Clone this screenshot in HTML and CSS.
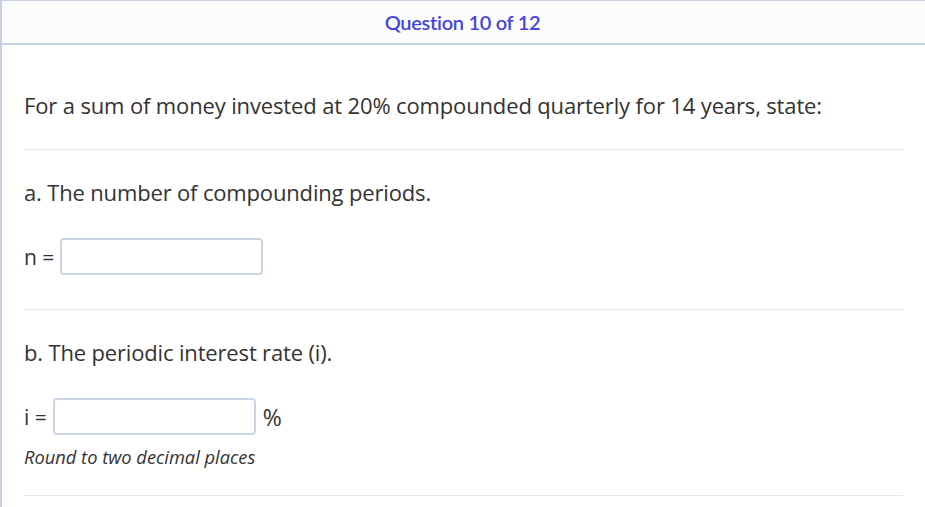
FILE: index.html
```html
<!DOCTYPE html>
<html lang="en">
<head>
<meta charset="utf-8">
<title>Question 10 of 12</title>
<link rel="stylesheet" href="styles.css">
</head>
<body>
<div class="frame">
  <header class="header">
    <h1 class="header-title">Question 10 of 12</h1>
  </header>
  <main class="content">
    <p class="prompt">For a sum of money invested at 20% compounded quarterly for 14 years, state:</p>
    <hr class="divider">
    <section class="part">
      <p class="part-title">a. The number of compounding periods.</p>
      <div class="answer-row">
        <span class="label">n =</span>
        <input class="answer" type="text" aria-label="n">
      </div>
    </section>
    <hr class="divider">
    <section class="part">
      <p class="part-title">b. The periodic interest rate (i).</p>
      <div class="answer-row">
        <span class="label">i =</span>
        <input class="answer" type="text" aria-label="i">
        <span class="unit">%</span>
      </div>
      <p class="hint">Round to two decimal places</p>
    </section>
    <hr class="divider">
  </main>
</div>
</body>
</html>
```

FILE: styles.css
```css
* { box-sizing: border-box; }
html, body { margin: 0; padding: 0; background: #fff; }
body { font-family: "Open Sans", "Liberation Sans", sans-serif; color: #333; }

.frame {
  border-left: 2px solid #c7d0e1;
  min-height: 507px;
}

.header {
  height: 45px;
  border-top: 1px solid #c7d0e1;
  border-bottom: 2px solid #c7d0e1;
  background: #fcfcfd;
  display: flex;
  align-items: center;
  justify-content: center;
}
.header-title {
  margin: 0;
  font-family: "Lato", sans-serif;
  font-weight: 600;
  font-size: 20px;
  color: #4545e0;
  letter-spacing: -0.3px;
  padding-right: 2px;
}

.content {
  padding: 0 22px 0 22px;
}

.prompt {
  margin: 45px 0 29px;
  font-size: 22px;
  line-height: 30px;
  letter-spacing: -0.14px;
}

.divider {
  border: 0;
  border-top: 1px solid #e9e9e9;
  margin: 0;
}

.part { padding-top: 27px; padding-bottom: 34px; }
.part:last-of-type { padding-bottom: 26px; }

.part-title {
  margin: 0 0 31px;
  font-size: 22px;
  line-height: 30px;
  letter-spacing: -0.16px;
}

.answer-row {
  display: flex;
  align-items: center;
  gap: 6px;
  font-size: 21px;
}
.label { line-height: 26px; }
.answer {
  width: 203px;
  height: 37px;
  border: 2px solid #cbd4e4;
  border-radius: 4px;
  background: #fff;
  font: inherit;
}
.unit { margin-left: 1px; font-size: 23px; }

.hint {
  margin: 10px 0 0;
  font-style: italic;
  font-size: 18.3px;
  line-height: 24px;
}
```
